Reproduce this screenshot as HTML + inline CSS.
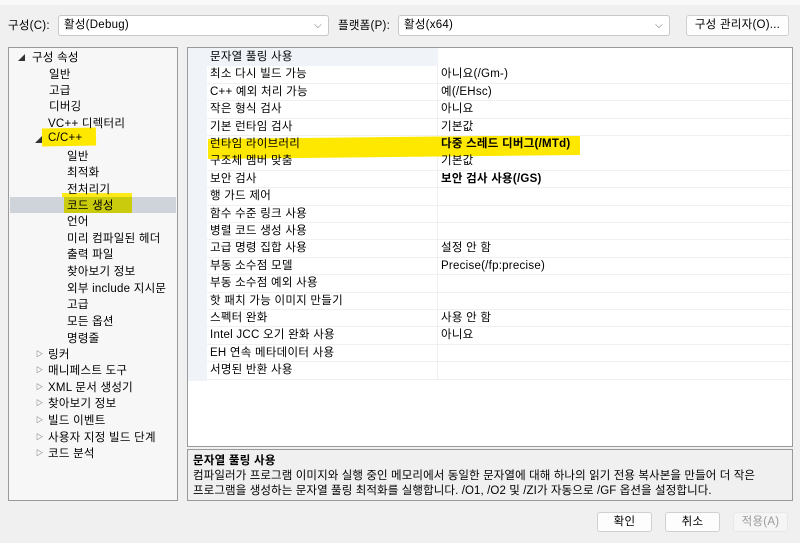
<!DOCTYPE html>
<html><head><meta charset="utf-8"><style>
*{margin:0;padding:0;box-sizing:border-box}
body{width:800px;height:543px;background:#f0f0f0;font-family:"Liberation Sans","Noto Sans CJK KR",sans-serif;font-size:11.5px;color:#000;position:relative;overflow:hidden;letter-spacing:0.25px}
.a{position:absolute;white-space:nowrap}
.box{position:absolute;background:#fff;border:1px solid #adadad}
.combo{position:absolute;background:#fff;border:1px solid #c8c8c8;border-radius:3px;height:21px;padding:2px 5px;line-height:15px}
.btn{position:absolute;background:#fdfdfd;border:1px solid #d0d0d0;border-radius:3px;text-align:center;line-height:19px}
.hl{position:absolute;background:#ffe800}
.row{position:absolute;left:207px;width:584px;height:17.4px;border-bottom:1px solid #eef0f3;line-height:16px}
.row span{position:absolute}
.row .n{left:3px}.row .v{left:234px}
.vl{position:absolute;left:437px;top:66px;width:1px;height:313px;background:#eef0f3}
.tri{position:absolute;font-size:7px;color:#333}
</style></head><body>
<div class="a" style="left:0;top:0;width:800px;height:5px;background:#f9f9f9"></div>
<div class="a" style="left:8px;top:17px">구성(C):</div>
<div class="combo" style="left:58px;top:15px;width:271px">활성(Debug)<span class="a" style="right:6px;top:2px;color:#666;font-size:10px">⌵</span></div>
<div class="a" style="left:338px;top:17px">플랫폼(P):</div>
<div class="combo" style="left:398px;top:15px;width:272px">활성(x64)<span class="a" style="right:6px;top:2px;color:#666;font-size:10px">⌵</span></div>
<div class="btn" style="left:686px;top:15px;width:103px;height:21px">구성 관리자(O)...</div>

<div class="box" style="left:8px;top:47px;width:170px;height:454px;background:#f7f7f7;border-color:#9a9a9a"></div>
<div class="hl" style="left:42px;top:128px;width:54px;height:18px;transform:rotate(-1deg)"></div>
<div class="hl" style="left:62px;top:193px;width:70px;height:19px;opacity:.9"></div>
<div class="a" style="left:10px;top:197px;width:166px;height:16px;background:#cfd3da"></div>
<div class="hl" style="left:64px;top:197px;width:68px;height:16px;background:#c9cb0c"></div>
<div class="tri" style="left:18px;top:53px">◢</div><div class="a" style="left:32px;top:49px">구성 속성</div>
<div class="a" style="left:49px;top:66px">일반</div>
<div class="a" style="left:49px;top:82px">고급</div>
<div class="a" style="left:49px;top:98px">디버깅</div>
<div class="a" style="left:48px;top:115px">VC++ 디렉터리</div>
<div class="tri" style="left:35px;top:135px">◢</div><div class="a" style="left:48px;top:132px">C/C++</div>
<div class="a" style="left:67px;top:148px">일반</div>
<div class="a" style="left:67px;top:164px">최적화</div>
<div class="a" style="left:67px;top:181px">전처리기</div>
<div class="a" style="left:67px;top:197px">코드 생성</div>
<div class="a" style="left:67px;top:213px">언어</div>
<div class="a" style="left:67px;top:230px">미리 컴파일된 헤더</div>
<div class="a" style="left:67px;top:246px">출력 파일</div>
<div class="a" style="left:67px;top:263px">찾아보기 정보</div>
<div class="a" style="left:67px;top:280px">외부 include 지시문</div>
<div class="a" style="left:67px;top:296px">고급</div>
<div class="a" style="left:67px;top:313px">모든 옵션</div>
<div class="a" style="left:67px;top:330px">명령줄</div>
<div class="tri" style="left:36px;top:349px">▷</div><div class="a" style="left:48px;top:346px">링커</div>
<div class="tri" style="left:36px;top:365px">▷</div><div class="a" style="left:48px;top:362px">매니페스트 도구</div>
<div class="tri" style="left:36px;top:382px">▷</div><div class="a" style="left:48px;top:379px">XML 문서 생성기</div>
<div class="tri" style="left:36px;top:398px">▷</div><div class="a" style="left:48px;top:395px">찾아보기 정보</div>
<div class="tri" style="left:36px;top:415px">▷</div><div class="a" style="left:48px;top:412px">빌드 이벤트</div>
<div class="tri" style="left:36px;top:432px">▷</div><div class="a" style="left:48px;top:429px">사용자 지정 빌드 단계</div>
<div class="tri" style="left:36px;top:448px">▷</div><div class="a" style="left:48px;top:445px">코드 분석</div>

<div class="box" style="left:187px;top:47px;width:606px;height:400px;border-color:#9a9a9a"></div>
<div class="a" style="left:188px;top:48px;width:19px;height:333px;background:#f0f4f9"></div>
<div class="a" style="left:207px;top:48px;width:231px;height:18px;background:#f0f4f9"></div>
<div class="vl"></div>
<div class="hl" style="left:208px;top:137px;width:372px;height:20px;transform:rotate(-0.6deg)"></div>
<div class="row" style="top:49px;border:none"><span class="n">문자열 풀링 사용</span></div>
<div class="row" style="top:66.4px"><span class="n">최소 다시 빌드 가능</span><span class="v">아니요(/Gm-)</span></div>
<div class="row" style="top:83.8px"><span class="n">C++ 예외 처리 가능</span><span class="v">예(/EHsc)</span></div>
<div class="row" style="top:101.2px"><span class="n">작은 형식 검사</span><span class="v">아니요</span></div>
<div class="row" style="top:118.6px"><span class="n">기본 런타임 검사</span><span class="v">기본값</span></div>
<div class="row" style="top:136px;border:none"><span class="n">런타임 라이브러리</span><span class="v" style="font-weight:bold">다중 스레드 디버그(/MTd)</span></div>
<div class="row" style="top:153.4px"><span class="n">구조체 멤버 맞춤</span><span class="v">기본값</span></div>
<div class="row" style="top:170.8px"><span class="n">보안 검사</span><span class="v" style="font-weight:bold">보안 검사 사용(/GS)</span></div>
<div class="row" style="top:188.2px"><span class="n">행 가드 제어</span></div>
<div class="row" style="top:205.6px"><span class="n">함수 수준 링크 사용</span></div>
<div class="row" style="top:223px"><span class="n">병렬 코드 생성 사용</span></div>
<div class="row" style="top:240.4px"><span class="n">고급 명령 집합 사용</span><span class="v">설정 안 함</span></div>
<div class="row" style="top:257.8px"><span class="n">부동 소수점 모델</span><span class="v">Precise(/fp:precise)</span></div>
<div class="row" style="top:275.2px"><span class="n">부동 소수점 예외 사용</span></div>
<div class="row" style="top:292.6px"><span class="n">핫 패치 가능 이미지 만들기</span></div>
<div class="row" style="top:310px"><span class="n">스펙터 완화</span><span class="v">사용 안 함</span></div>
<div class="row" style="top:327.4px"><span class="n">Intel JCC 오기 완화 사용</span><span class="v">아니요</span></div>
<div class="row" style="top:344.8px"><span class="n">EH 연속 메타데이터 사용</span></div>
<div class="row" style="top:362.2px"><span class="n">서명된 반환 사용</span></div>

<div class="a" style="left:187px;top:449px;width:606px;height:52px;border:1px solid #9a9a9a;background:#f0f0f0"></div>
<div class="a" style="left:193px;top:452px;font-weight:bold">문자열 풀링 사용</div>
<div class="a" style="left:193px;top:467px;letter-spacing:0.1px">컴파일러가 프로그램 이미지와 실행 중인 메모리에서 동일한 문자열에 대해 하나의 읽기 전용 복사본을 만들어 더 작은</div>
<div class="a" style="left:193px;top:482px;letter-spacing:0.1px">프로그램을 생성하는 문자열 풀링 최적화를 실행합니다. /O1, /O2 및 /ZI가 자동으로 /GF 옵션을 설정합니다.</div>

<div class="btn" style="left:597px;top:512px;width:55px;height:20px">확인</div>
<div class="btn" style="left:665px;top:512px;width:55px;height:20px">취소</div>
<div class="btn" style="left:733px;top:512px;width:55px;height:20px;background:#f5f5f5;border-color:#e8e8e8;color:#9a9a9a">적용(A)</div>
</body></html>
